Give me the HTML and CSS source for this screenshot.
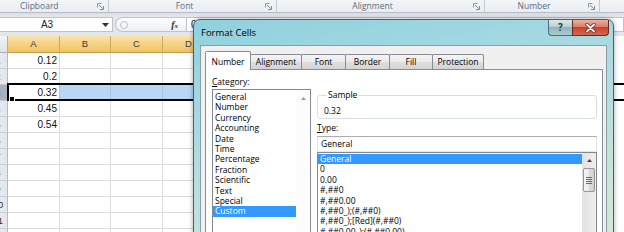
FILE: index.html
```html
<!DOCTYPE html>
<html>
<head>
<meta charset="utf-8">
<link rel="stylesheet" href="styles.css">
</head>
<body>
<div class="excel">
  <div class="ribbon">
    <div class="grp g-clip"><span class="glabel">Clipboard</span><span class="launch"><svg width="7" height="7" viewBox="0 0 7 7"><path d="M0.5 4.5V0.5H4.5" fill="none" stroke="#8a96a6"/><path d="M2 2L5.5 5.5M6.5 3V6.5H3" fill="none" stroke="#7d8a9b"/></svg></span></div>
    <div class="grp g-font"><span class="glabel">Font</span><span class="launch"><svg width="7" height="7" viewBox="0 0 7 7"><path d="M0.5 4.5V0.5H4.5" fill="none" stroke="#8a96a6"/><path d="M2 2L5.5 5.5M6.5 3V6.5H3" fill="none" stroke="#7d8a9b"/></svg></span></div>
    <div class="grp g-align"><span class="glabel">Alignment</span><span class="launch"><svg width="7" height="7" viewBox="0 0 7 7"><path d="M0.5 4.5V0.5H4.5" fill="none" stroke="#8a96a6"/><path d="M2 2L5.5 5.5M6.5 3V6.5H3" fill="none" stroke="#7d8a9b"/></svg></span></div>
    <div class="grp g-num"><span class="glabel">Number</span><span class="launch"><svg width="7" height="7" viewBox="0 0 7 7"><path d="M0.5 4.5V0.5H4.5" fill="none" stroke="#8a96a6"/><path d="M2 2L5.5 5.5M6.5 3V6.5H3" fill="none" stroke="#7d8a9b"/></svg></span></div>
    <div class="grp g-rest"></div>
  </div>
  <div class="ribbon-edge"></div>
  <div class="fbar">
    <div class="namebox"><span class="nb-text">A3</span><span class="nb-arrow"><svg width="7" height="4" viewBox="0 0 7 4"><path d="M0 0H7L3.5 4Z" fill="#333"/></svg></span></div>
    <div class="fx-area"><span class="grip"></span><span class="fx">f<small>x</small></span></div>
    <div class="finput">0.32</div>
  </div>
  <div class="grid">
    <div class="hrow">
      <div class="corner"></div>
      <div class="ch wa">A</div><div class="ch wb">B</div><div class="ch wc">C</div><div class="ch wc">D</div><div class="ch wc">E</div><div class="ch wc">F</div><div class="ch wc">G</div><div class="ch wc">H</div><div class="ch wc">I</div><div class="ch wc">J</div>
    </div>
    <div class="row"><div class="rh">1</div><div class="c wa">0.12</div><div class="c wb"></div><div class="c wc"></div><div class="c wc"></div><div class="c wc"></div><div class="c wc"></div><div class="c wc"></div><div class="c wc"></div><div class="c wc"></div><div class="c wc"></div></div>
    <div class="row"><div class="rh">2</div><div class="c wa">0.2</div><div class="c wb"></div><div class="c wc"></div><div class="c wc"></div><div class="c wc"></div><div class="c wc"></div><div class="c wc"></div><div class="c wc"></div><div class="c wc"></div><div class="c wc"></div></div>
    <div class="row sel"><div class="rh">3</div><div class="c wa active">0.32</div><div class="c wb"></div><div class="c wc"></div><div class="c wc"></div><div class="c wc"></div><div class="c wc"></div><div class="c wc"></div><div class="c wc"></div><div class="c wc"></div><div class="c wc"></div></div>
    <div class="row"><div class="rh">4</div><div class="c wa">0.45</div><div class="c wb"></div><div class="c wc"></div><div class="c wc"></div><div class="c wc"></div><div class="c wc"></div><div class="c wc"></div><div class="c wc"></div><div class="c wc"></div><div class="c wc"></div></div>
    <div class="row"><div class="rh">5</div><div class="c wa">0.54</div><div class="c wb"></div><div class="c wc"></div><div class="c wc"></div><div class="c wc"></div><div class="c wc"></div><div class="c wc"></div><div class="c wc"></div><div class="c wc"></div><div class="c wc"></div></div>
    <div class="row"><div class="rh">6</div><div class="c wa"></div><div class="c wb"></div><div class="c wc"></div><div class="c wc"></div><div class="c wc"></div><div class="c wc"></div><div class="c wc"></div><div class="c wc"></div><div class="c wc"></div><div class="c wc"></div></div>
    <div class="row"><div class="rh">7</div><div class="c wa"></div><div class="c wb"></div><div class="c wc"></div><div class="c wc"></div><div class="c wc"></div><div class="c wc"></div><div class="c wc"></div><div class="c wc"></div><div class="c wc"></div><div class="c wc"></div></div>
    <div class="row"><div class="rh">8</div><div class="c wa"></div><div class="c wb"></div><div class="c wc"></div><div class="c wc"></div><div class="c wc"></div><div class="c wc"></div><div class="c wc"></div><div class="c wc"></div><div class="c wc"></div><div class="c wc"></div></div>
    <div class="row"><div class="rh">9</div><div class="c wa"></div><div class="c wb"></div><div class="c wc"></div><div class="c wc"></div><div class="c wc"></div><div class="c wc"></div><div class="c wc"></div><div class="c wc"></div><div class="c wc"></div><div class="c wc"></div></div>
    <div class="row"><div class="rh">10</div><div class="c wa"></div><div class="c wb"></div><div class="c wc"></div><div class="c wc"></div><div class="c wc"></div><div class="c wc"></div><div class="c wc"></div><div class="c wc"></div><div class="c wc"></div><div class="c wc"></div></div>
    <div class="row"><div class="rh">11</div><div class="c wa"></div><div class="c wb"></div><div class="c wc"></div><div class="c wc"></div><div class="c wc"></div><div class="c wc"></div><div class="c wc"></div><div class="c wc"></div><div class="c wc"></div><div class="c wc"></div></div>
    <div class="row"><div class="rh">12</div><div class="c wa"></div><div class="c wb"></div><div class="c wc"></div><div class="c wc"></div><div class="c wc"></div><div class="c wc"></div><div class="c wc"></div><div class="c wc"></div><div class="c wc"></div><div class="c wc"></div></div>
  </div>
  <div class="selection"></div>
  <div class="fillhandle"></div>
</div>

<div class="dialog">
  <div class="titlebar">
    <span class="title">Format Cells</span>
    <div class="capbtns">
      <div class="help">?</div>
      <div class="close"><svg width="13" height="10" viewBox="0 0 13 10"><path d="M3 1.5L10 8.5M10 1.5L3 8.5" stroke="#5a2418" stroke-width="3.2" stroke-linecap="round"/><path d="M3 1.5L10 8.5M10 1.5L3 8.5" stroke="#fff" stroke-width="1.8" stroke-linecap="round"/></svg></div>
    </div>
  </div>
  <div class="client">
    <div class="tabs">
      <div class="tab active t-num">Number</div>
      <div class="tab t-align">Alignment</div>
      <div class="tab t-font">Font</div>
      <div class="tab t-border">Border</div>
      <div class="tab t-fill">Fill</div>
      <div class="tab t-prot">Protection</div>
    </div>
    <div class="panel">
      <div class="leftcol">
        <div class="lbl"><u>C</u>ategory:</div>
        <div class="catlist">
          <div class="items">
            <div class="it">General</div>
            <div class="it">Number</div>
            <div class="it">Currency</div>
            <div class="it">Accounting</div>
            <div class="it">Date</div>
            <div class="it">Time</div>
            <div class="it">Percentage</div>
            <div class="it">Fraction</div>
            <div class="it">Scientific</div>
            <div class="it">Text</div>
            <div class="it">Special</div>
            <div class="it hl">Custom</div>
          </div>
          <div class="catscroll"><svg width="5" height="3" viewBox="0 0 5 3"><path d="M0 3H5L2.5 0Z" fill="#9a9a9a"/></svg></div>
        </div>
      </div>
      <div class="rightcol">
        <fieldset class="sample">
          <legend>Sample</legend>
          <div class="sampleval">0.32</div>
        </fieldset>
        <div class="lbl typelbl"><u>T</u>ype:</div>
        <div class="typeinput">General</div>
        <div class="typelist">
          <div class="items">
            <div class="it hl">General</div>
            <div class="it">0</div>
            <div class="it">0.00</div>
            <div class="it">#,##0</div>
            <div class="it">#,##0.00</div>
            <div class="it">#,##0_);(#,##0)</div>
            <div class="it">#,##0_);[Red](#,##0)</div>
            <div class="it">#,##0.00_);(#,##0.00)</div>
            <div class="it">#,##0.00_);[Red](#,##0.00)</div>
          </div>
          <div class="tscroll">
            <div class="sbtn"><svg width="5" height="3" viewBox="0 0 5 3"><path d="M0 3H5L2.5 0Z" fill="#404040"/></svg></div>
            <div class="thumb"><span class="gripline"></span><span class="gripline"></span><span class="gripline"></span><span class="gripline"></span></div>
          </div>
        </div>
      </div>
    </div>
  </div>
</div>
</body>
</html>
```

FILE: styles.css
```css
html, body {
  margin: 0;
  padding: 0;
}
body {
  width: 624px;
  height: 232px;
  overflow: hidden;
  position: relative;
  background: #fff;
  font-family: "Open Sans", "Noto Sans", sans-serif;
}

/* ---------- Excel ribbon strip ---------- */
.ribbon {
  display: flex;
  height: 12px;
  background: linear-gradient(#f3f5f8, #e9edf2);
}
.grp {
  display: flex;
  align-items: center;
  height: 12px;
  box-sizing: border-box;
  border-right: 1px solid #c5cbd3;
}
.g-clip { width: 109px; }
.g-font { width: 168px; }
.g-align { width: 208px; }
.g-num { width: 115px; }
.g-rest { flex: 1; border-right: none; }
.glabel {
  flex: 1;
  text-align: center;
  font-size: 8.5px;
  line-height: 12px;
  color: #5d6b7d;
}
.g-clip .glabel { text-align: left; padding-left: 20px; }
.launch {
  width: 16px;
  display: flex;
  justify-content: center;
  align-items: center;
}
.launch svg { display: block; }
.ribbon-edge {
  height: 4px;
  background: linear-gradient(#b7bec8 0, #b7bec8 1px, #d9dee4 1px, #e3e7ec 4px);
}

/* ---------- formula bar ---------- */
.fbar {
  display: flex;
  height: 20px;
  padding: 1px 0 4px;
  box-sizing: border-box;
  background: #e3e7ec;
}
.namebox {
  width: 113px;
  background: #fff;
  border: 1px solid #bcc3cc;
  border-left: none;
  box-sizing: border-box;
  display: flex;
  align-items: center;
}
.nb-text {
  flex: 1;
  text-align: center;
  font-family: "Liberation Sans", sans-serif;
  font-size: 10px;
  color: #222;
  padding-right: 4px;
}
.nb-arrow {
  width: 14px;
  display: flex;
  justify-content: center;
}
.nb-arrow svg { display: block; }
.fx-area {
  margin-left: 2px;
  width: 71px;
  box-sizing: border-box;
  border: 1px solid #bcc4ce;
  border-right: none;
  border-radius: 8px 0 0 8px;
  background: linear-gradient(#fdfdfd, #eceff3);
  display: flex;
  align-items: center;
}
.grip {
  width: 6px;
  height: 6px;
  margin-left: 4px;
  border: 1px solid #b9c1cb;
  border-radius: 50%;
  background: #f4f6f8;
}
.fx {
  margin-left: auto;
  margin-right: 8px;
  font-family: "Liberation Serif", serif;
  font-style: italic;
  font-weight: bold;
  font-size: 10px;
  color: #333;
}
.fx small { font-size: 7px; }
.finput {
  flex: 1;
  background: #fff;
  border: 1px solid #bcc3cc;
  box-sizing: border-box;
  font-family: "Liberation Sans", sans-serif;
  font-size: 10px;
  line-height: 13px;
  padding-left: 4px;
  color: #222;
}

/* ---------- grid ---------- */
.grid {
  margin-left: -22px;
  font-family: "Liberation Sans", sans-serif;
}
.hrow {
  display: flex;
  height: 17px;
}
.corner {
  width: 30px;
  flex: none;
  box-sizing: border-box;
  background: linear-gradient(#f2f4f6, #dfe3e8);
  border-right: 1px solid #aab1bb;
  border-bottom: 1px solid #aab1bb;
}
.ch {
  flex: none;
  box-sizing: border-box;
  background: linear-gradient(#fbe3ae, #f6d183 50%, #f2c461);
  border-right: 1px solid #c9a968;
  border-bottom: 1px solid #c29a52;
  text-align: center;
  font-size: 9.5px;
  line-height: 16px;
  color: #3a3a3a;
}
.wa { width: 52px; }
.wb { width: 51px; }
.wc { width: 52px; }
.row {
  display: flex;
  height: 16px;
}
.rh {
  width: 30px;
  flex: none;
  box-sizing: border-box;
  padding-left: 11px;
  background: linear-gradient(90deg, #eef0f3, #e3e6ea);
  border-right: 1px solid #b3bac4;
  border-bottom: 1px solid #c6ccd4;
  text-align: center;
  font-size: 9.5px;
  line-height: 15px;
  color: #333;
}
.c {
  flex: none;
  box-sizing: border-box;
  border-right: 1px solid #dadcdd;
  border-bottom: 1px solid #dadcdd;
  text-align: right;
  padding-right: 2px;
  font-size: 10px;
  line-height: 15px;
  color: #111;
}
.row.sel .rh { background: #a9b1bc; }
.row.sel .c { background: #bad6f6; border-color: #a9c4e4; }
.row.sel .c.active { background: #fff; }
.selection {
  position: absolute;
  left: 7px;
  top: 83px;
  width: 700px;
  height: 18px;
  box-sizing: border-box;
  border: 2px solid #000;
}
.fillhandle {
  position: absolute;
  left: 9px;
  top: 97px;
  width: 4px;
  height: 4px;
  background: #000;
  border: 1px solid #fff;
  border-top: none;
}

/* ---------- dialog ---------- */
.dialog {
  position: absolute;
  left: 193px;
  top: 19px;
  width: 421px;
  height: 240px;
  box-sizing: border-box;
  border: 1px solid #46606a;
  border-radius: 7px 7px 0 0;
  background: linear-gradient(168deg, #8fd1de 0%, #a9dae2 35%, #c6e3d9 70%, #d8ead2 100%);
  box-shadow: 0 0 5px rgba(0, 0, 0, 0.35);
  display: flex;
  flex-direction: column;
}
.titlebar {
  height: 25px;
  flex: none;
  display: flex;
  align-items: center;
}
.title {
  padding-left: 7px;
  font-size: 9.5px;
  color: #000;
}
.capbtns {
  align-self: flex-start;
  margin-left: auto;
  margin-right: 4px;
  display: flex;
  height: 16px;
}
.help {
  width: 24px;
  box-sizing: border-box;
  border: 1px solid #536e75;
  border-top: none;
  border-right: none;
  border-radius: 0 0 0 4px;
  background: linear-gradient(#dbeaec, #b6d0d4 45%, #93b5ba 50%, #a9c9cd);
  text-align: center;
  font-size: 10px;
  font-weight: bold;
  line-height: 15px;
  color: #2b3c42;
}
.close {
  width: 37px;
  box-sizing: border-box;
  border: 1px solid #6b2a1f;
  border-top: none;
  border-radius: 0 0 4px 0;
  background: linear-gradient(#eab2a5, #dc7d66 45%, #c4432b 50%, #d26a50);
  display: flex;
  justify-content: center;
  align-items: center;
}
.close svg { display: block; }
.client {
  flex: 1;
  margin: 0 6px;
  background: #f0f0f0;
  border: 1px solid #8a9ca4;
  border-bottom: none;
  padding: 5px 3px 0 4px;
  display: flex;
  flex-direction: column;
  font-size: 8.5px;
  color: #000;
}
.tabs {
  display: flex;
  align-items: flex-end;
  height: 18px;
  flex: none;
  position: relative;
  z-index: 1;
}
.tab {
  box-sizing: border-box;
  height: 15px;
  margin-left: -1px;
  border: 1px solid #898c95;
  border-bottom: none;
  border-radius: 2px 2px 0 0;
  background: linear-gradient(#f3f3f3, #ebebeb 50%, #dedede 50%, #d4d4d4);
  text-align: center;
  line-height: 14px;
  white-space: nowrap;
}
.tab.active {
  margin-left: 0;
  height: 19px;
  margin-bottom: -1px;
  background: #fff;
  line-height: 20px;
}
.t-num { width: 46px; }
.t-align { width: 52px; }
.t-font { width: 45px; }
.t-border { width: 45px; }
.t-fill { width: 44px; }
.t-prot { width: 52px; }
.panel {
  flex: 1;
  background: #fff;
  border: 1px solid #898c95;
  border-bottom: none;
  display: flex;
  gap: 6px;
  padding: 0 5px 0 6px;
}
.leftcol {
  width: 99px;
  display: flex;
  flex-direction: column;
}
.lbl {
  line-height: 12px;
  height: 12px;
}
.leftcol .lbl { margin-top: 6px; }
.catlist {
  margin-top: 1px;
  flex: 1;
  border: 1px solid #828790;
  display: flex;
}
.items {
  flex: 1;
  padding-top: 2px;
}
.it {
  height: 10.4px;
  line-height: 10.4px;
  padding-left: 2px;
  white-space: nowrap;
}
.it.hl {
  background: #3399ff;
  color: #fff;
}
.catscroll {
  width: 14px;
  display: flex;
  justify-content: center;
  padding-top: 7px;
  box-sizing: border-box;
  background: #fcfcfc;
}
.catscroll svg { display: block; }
.rightcol {
  flex: 1;
  display: flex;
  flex-direction: column;
}
.sample {
  margin: 19px 0 0;
  padding: 4px 0 1px 6px;
  border: 1px solid #d5dfe5;
  border-radius: 3px;
  min-width: 0;
}
.sample legend {
  padding: 0 1px;
  margin-left: 3px;
  line-height: 12px;
}
.sampleval {
  line-height: 12px;
}
.typelbl { margin-top: 3px; }
.typeinput {
  margin-top: 2px;
  height: 16px;
  box-sizing: border-box;
  border: 1px solid;
  border-color: #abadb3 #dbdfe6 #e3e9ef #e2e3ea;
  padding-left: 3px;
  line-height: 14px;
}
.typelist {
  flex: 1;
  border: 1px solid #828790;
  display: flex;
}
.typelist .items { padding-top: 1px; }
.tscroll {
  width: 14px;
  background: linear-gradient(90deg, #e2e2e2, #efefef);
  display: flex;
  flex-direction: column;
  align-items: center;
}
.sbtn {
  height: 14px;
  display: flex;
  align-items: center;
  justify-content: center;
}
.sbtn svg { display: block; }
.thumb {
  margin-top: 1px;
  width: 12px;
  height: 24px;
  box-sizing: border-box;
  border: 1px solid #959595;
  border-radius: 2px;
  background: linear-gradient(90deg, #f4f4f4, #e8e8e8 50%, #dcdcdc 50%, #d2d2d2);
  display: flex;
  flex-direction: column;
  justify-content: center;
  align-items: center;
  gap: 1px;
}
.gripline {
  width: 6px;
  height: 1px;
  background: #6b6b6b;
}
```
